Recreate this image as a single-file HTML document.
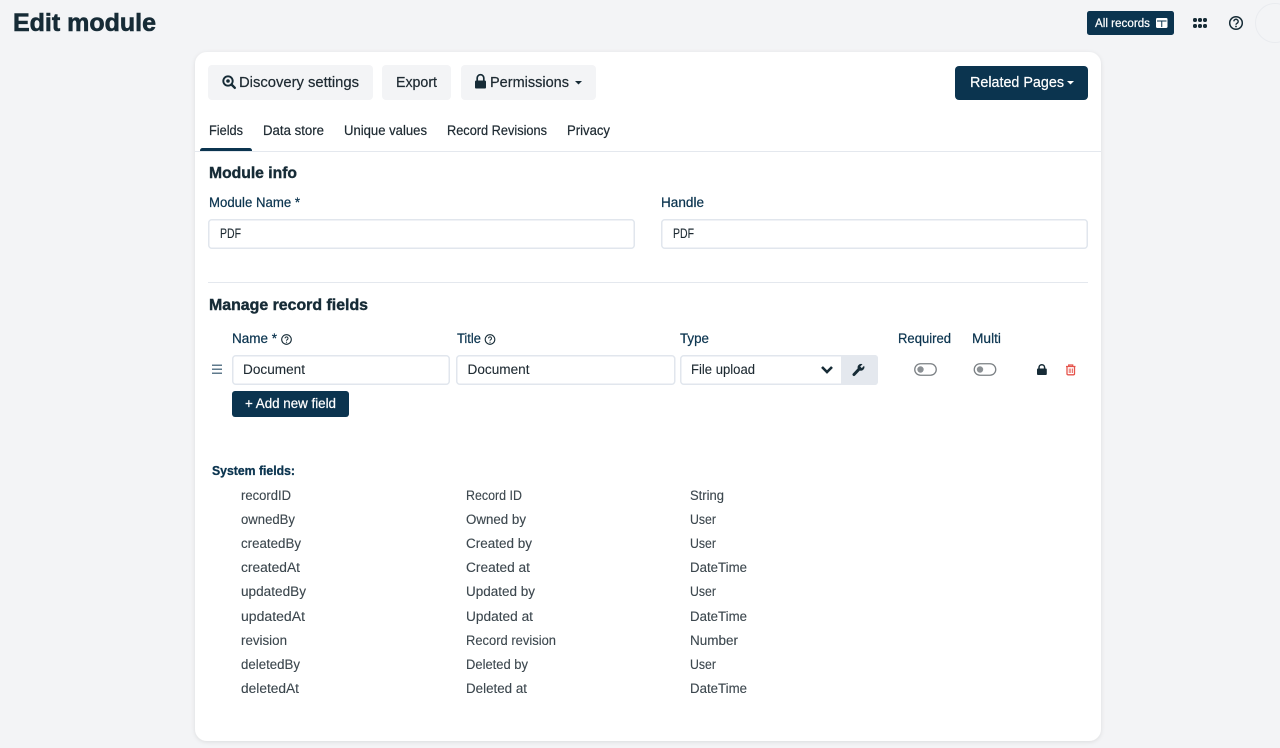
<!DOCTYPE html>
<html lang="en"><head><meta charset="utf-8"><title>Edit module</title>
<style>
html,body{margin:0;padding:0;width:1280px;height:748px;overflow:hidden;background:#f3f4f6}
svg{display:block}
text{font-family:"Liberation Sans",sans-serif;font-size:13.5px;fill:#1e2a32;stroke:#1e2a32;stroke-width:.22px;white-space:pre}
.n{fill:#0b344f;stroke:#0b344f}
.w{fill:#fff;stroke:#fff}
.b{font-weight:bold;stroke-width:.3px}
.l text{fill:#3c474e;stroke:#3c474e;stroke-width:.12px}
</style></head><body>
<svg width="1280" height="748" viewBox="0 0 1280 748" xmlns="http://www.w3.org/2000/svg">
<defs><filter id="s" x="-5%" y="-5%" width="110%" height="110%"><feDropShadow dx="0" dy="1" stdDeviation="2" flood-color="#000" flood-opacity=".1"/></filter></defs>
<rect width="1280" height="748" fill="#f3f4f6"/>

<!-- header -->
<text x="13" y="31" class="b" style="font-size:25px;fill:#162b36;stroke:#162b36;stroke-width:.6px" textLength="143" lengthAdjust="spacingAndGlyphs">Edit module</text>
<rect x="1087" y="11" width="87" height="24" rx="2.5" fill="#0b344f"/>
<text x="1095" y="27" class="w" style="font-size:11.5px" textLength="55" lengthAdjust="spacingAndGlyphs">All records</text>
<rect x="1156" y="18" width="11.500" height="10" rx="1.200" fill="#fff"/>
<path d="M1157 21h9.500M1161.750 21v6" stroke="#0b344f" stroke-width="1" fill="none"/>
<g fill="#162b36"><rect x="1193" y="18" width="4" height="4" rx="1.700"/><rect x="1198" y="18" width="4" height="4" rx="1.700"/><rect x="1203" y="18" width="4" height="4" rx="1.700"/><rect x="1193" y="24" width="4" height="4" rx="1.700"/><rect x="1198" y="24" width="4" height="4" rx="1.700"/><rect x="1203" y="24" width="4" height="4" rx="1.700"/></g>
<circle cx="1236" cy="23" r="6.300" fill="none" stroke="#162b36" stroke-width="1.500"/>
<path d="M1233.800 21.300a2.200 2.100 0 1 1 3.300 1.900c-.8.5-1.100.9-1.100 1.600" fill="none" stroke="#162b36" stroke-width="1.400"/><circle cx="1236" cy="26.500" r=".9" fill="#162b36"/>
<circle cx="1275" cy="23" r="19.500" fill="#f3f4f6" stroke="#e9ebef"/>

<!-- card -->
<rect x="195" y="52" width="906" height="689" rx="12" fill="#fff" filter="url(#s)"/>

<!-- toolbar -->
<rect x="208" y="65" width="165" height="35" rx="4" fill="#f3f4f6"/>
<rect x="382" y="65" width="69" height="35" rx="4" fill="#f3f4f6"/>
<rect x="461" y="65" width="135" height="35" rx="4" fill="#f3f4f6"/>
<rect x="955" y="66" width="133" height="34" rx="4" fill="#0b344f"/>
<circle cx="228" cy="81" r="4.700" fill="none" stroke="#162b36" stroke-width="1.900"/><circle cx="228" cy="81" r="1.800" fill="#162b36"/><path d="M231.500 84.500l3.300 3.300" stroke="#162b36" stroke-width="2.400" stroke-linecap="round"/>
<text x="239" y="87" style="font-size:14.500px" textLength="120" lengthAdjust="spacingAndGlyphs">Discovery settings</text>
<text x="396" y="87" style="font-size:14.500px" textLength="41" lengthAdjust="spacingAndGlyphs">Export</text>
<path d="M477.200 81v-3a3.300 3.300 0 0 1 6.600 0v3" fill="none" stroke="#162b36" stroke-width="1.700"/><rect x="475" y="80.500" width="11" height="8" rx="1.300" fill="#162b36"/>
<text x="490" y="87" style="font-size:14.500px" textLength="79" lengthAdjust="spacingAndGlyphs">Permissions</text>
<path d="M575 81h7l-3.500 3.500z" fill="#162b36"/>
<text x="970" y="87" class="w" style="font-size:14.500px" textLength="94" lengthAdjust="spacingAndGlyphs">Related Pages</text>
<path d="M1067 81h7l-3.500 3.500z" fill="#fff"/>

<!-- tabs -->
<rect x="195" y="151" width="906" height="1" fill="#e4e8ee"/>
<path d="M200 151v-.5a2.500 2.500 0 0 1 2.500-2.500h47a2.500 2.500 0 0 1 2.500 2.500v.5z" fill="#0b344f"/>
<text x="209" y="135" textLength="34" lengthAdjust="spacingAndGlyphs">Fields</text>
<text x="263" y="135" textLength="61" lengthAdjust="spacingAndGlyphs">Data store</text>
<text x="344" y="135" textLength="83" lengthAdjust="spacingAndGlyphs">Unique values</text>
<text x="447" y="135" textLength="100" lengthAdjust="spacingAndGlyphs">Record Revisions</text>
<text x="567" y="135" textLength="43" lengthAdjust="spacingAndGlyphs">Privacy</text>

<!-- module info -->
<text x="209" y="178" class="b" style="font-size:15.500px;fill:#162b36;stroke:#162b36;stroke-width:.4px" textLength="88" lengthAdjust="spacingAndGlyphs">Module info</text>
<text x="209" y="207" class="n" textLength="91" lengthAdjust="spacingAndGlyphs">Module Name *</text>
<text x="661" y="207" class="n" textLength="43" lengthAdjust="spacingAndGlyphs">Handle</text>
<rect x="208.750" y="219.750" width="425.500" height="28.500" rx="3" fill="#fff" stroke="#e1e6ed" stroke-width="1.500"/>
<rect x="661.750" y="219.750" width="425.500" height="28.500" rx="3" fill="#fff" stroke="#e1e6ed" stroke-width="1.500"/>
<text x="220" y="238" style="font-size:13.500px;stroke-width:.1px" textLength="21" lengthAdjust="spacingAndGlyphs">PDF</text>
<text x="673" y="238" style="font-size:13.500px;stroke-width:.1px" textLength="21" lengthAdjust="spacingAndGlyphs">PDF</text>
<rect x="208" y="282" width="880" height="1" fill="#e4e8ee"/>

<!-- manage record fields -->
<text x="209" y="310" class="b" style="font-size:15.500px;fill:#162b36;stroke:#162b36;stroke-width:.4px" textLength="159" lengthAdjust="spacingAndGlyphs">Manage record fields</text>
<text x="232" y="343" class="n" textLength="45" lengthAdjust="spacingAndGlyphs">Name *</text>
<circle cx="286.500" cy="339.500" r="4.800" fill="none" stroke="#162b36" stroke-width="1.100"/><path d="M285 338.300a1.500 1.500 0 1 1 2.200 1.400c-.5.300-.7.600-.7 1.100" fill="none" stroke="#162b36"/><circle cx="286.500" cy="342.200" r=".6" fill="#162b36"/>
<text x="457" y="343" class="n" textLength="24" lengthAdjust="spacingAndGlyphs">Title</text>
<circle cx="490" cy="339.500" r="4.800" fill="none" stroke="#162b36" stroke-width="1.100"/><path d="M488.500 338.300a1.500 1.500 0 1 1 2.200 1.400c-.5.300-.7.600-.7 1.100" fill="none" stroke="#162b36"/><circle cx="490" cy="342.200" r=".6" fill="#162b36"/>
<text x="680" y="343" class="n" textLength="29" lengthAdjust="spacingAndGlyphs">Type</text>
<text x="898" y="343" class="n" textLength="53" lengthAdjust="spacingAndGlyphs">Required</text>
<text x="972" y="343" class="n" textLength="29" lengthAdjust="spacingAndGlyphs">Multi</text>

<g fill="#5f7a8c"><rect x="212" y="364.500" width="10" height="1.500"/><rect x="212" y="368.500" width="10" height="1.500"/><rect x="212" y="372.500" width="10" height="1.500"/></g>
<rect x="232.750" y="355.750" width="216.500" height="28.500" rx="3" fill="#fff" stroke="#e1e6ed" stroke-width="1.500"/>
<rect x="456.750" y="355.750" width="218" height="28.500" rx="3" fill="#fff" stroke="#e1e6ed" stroke-width="1.500"/>
<text x="243" y="374" style="stroke-width:.1px" textLength="62" lengthAdjust="spacingAndGlyphs">Document</text>
<text x="467.500" y="374" style="stroke-width:.1px" textLength="62" lengthAdjust="spacingAndGlyphs">Document</text>
<rect x="680.750" y="355.750" width="196.500" height="28.500" rx="3" fill="#fff" stroke="#e1e6ed" stroke-width="1.500"/>
<path d="M841 355h34a3 3 0 0 1 3 3v24a3 3 0 0 1-3 3h-34z" fill="#e4e8ee"/>
<text x="691" y="374" style="stroke-width:.1px" textLength="64" lengthAdjust="spacingAndGlyphs">File upload</text>
<path d="M822 367l5 5 5-5" fill="none" stroke="#162b36" stroke-width="2.600"/>
<path d="M854 374.500l5.500-5.800" stroke="#162b36" stroke-width="3" stroke-linecap="round"/><path d="M858 369a3.500 3.500 0 0 1 4.500-4.800l-2.300 2.300 1.600 1.600 2.300-2.300a3.500 3.500 0 0 1-4.800 4.500z" fill="#162b36"/>
<rect x="914.750" y="363.750" width="21.500" height="11.500" rx="5.750" fill="#fff" stroke="#7b8084" stroke-width="1.300"/><circle cx="920.500" cy="369.500" r="3.200" fill="#8b9094"/>
<rect x="974.250" y="363.750" width="21.500" height="11.500" rx="5.750" fill="#fff" stroke="#7b8084" stroke-width="1.300"/><circle cx="980" cy="369.500" r="3.200" fill="#8b9094"/>
<path d="M1039 369v-1.500a2.800 2.800 0 0 1 5.600 0V369" fill="none" stroke="#162b36" stroke-width="1.500"/><rect x="1037" y="368.500" width="9.800" height="6.500" rx="1" fill="#162b36"/>
<g fill="none" stroke="#e5534b" stroke-width="1.300"><path d="M1066 366.500h9.500M1068.700 366.500v-1.500h4v1.500"/><path d="M1067 366.500v7.300a1 1 0 0 0 1 1h5.500a1 1 0 0 0 1-1v-7.300"/><path d="M1069.200 368.500v4.500M1070.800 368.500v4.500M1072.400 368.500v4.500" stroke-width=".8"/></g>

<rect x="232" y="391" width="117" height="26" rx="3" fill="#0b344f"/>
<text x="245" y="408" class="w" textLength="91" lengthAdjust="spacingAndGlyphs">+ Add new field</text>

<!-- system fields -->
<text x="212" y="475" class="n b" style="font-size:13px" textLength="83" lengthAdjust="spacingAndGlyphs">System fields:</text>
<g class="l">
<text x="241" y="500" textLength="50" lengthAdjust="spacingAndGlyphs">recordID</text>
<text x="466" y="500" textLength="56" lengthAdjust="spacingAndGlyphs">Record ID</text>
<text x="690" y="500" textLength="34" lengthAdjust="spacingAndGlyphs">String</text>
<text x="241" y="524" textLength="54" lengthAdjust="spacingAndGlyphs">ownedBy</text>
<text x="466" y="524" textLength="60" lengthAdjust="spacingAndGlyphs">Owned by</text>
<text x="690" y="524" textLength="26" lengthAdjust="spacingAndGlyphs">User</text>
<text x="241" y="548" textLength="60" lengthAdjust="spacingAndGlyphs">createdBy</text>
<text x="466" y="548" textLength="66" lengthAdjust="spacingAndGlyphs">Created by</text>
<text x="690" y="548" textLength="26" lengthAdjust="spacingAndGlyphs">User</text>
<text x="241" y="572" textLength="59" lengthAdjust="spacingAndGlyphs">createdAt</text>
<text x="466" y="572" textLength="64" lengthAdjust="spacingAndGlyphs">Created at</text>
<text x="690" y="572" textLength="57" lengthAdjust="spacingAndGlyphs">DateTime</text>
<text x="241" y="596" textLength="65" lengthAdjust="spacingAndGlyphs">updatedBy</text>
<text x="466" y="596" textLength="69" lengthAdjust="spacingAndGlyphs">Updated by</text>
<text x="690" y="596" textLength="26" lengthAdjust="spacingAndGlyphs">User</text>
<text x="241" y="621" textLength="64" lengthAdjust="spacingAndGlyphs">updatedAt</text>
<text x="466" y="621" textLength="67" lengthAdjust="spacingAndGlyphs">Updated at</text>
<text x="690" y="621" textLength="57" lengthAdjust="spacingAndGlyphs">DateTime</text>
<text x="241" y="645" textLength="46" lengthAdjust="spacingAndGlyphs">revision</text>
<text x="466" y="645" textLength="90" lengthAdjust="spacingAndGlyphs">Record revision</text>
<text x="690" y="645" textLength="48" lengthAdjust="spacingAndGlyphs">Number</text>
<text x="241" y="669" textLength="59" lengthAdjust="spacingAndGlyphs">deletedBy</text>
<text x="466" y="669" textLength="62" lengthAdjust="spacingAndGlyphs">Deleted by</text>
<text x="690" y="669" textLength="26" lengthAdjust="spacingAndGlyphs">User</text>
<text x="241" y="693" textLength="58" lengthAdjust="spacingAndGlyphs">deletedAt</text>
<text x="466" y="693" textLength="61" lengthAdjust="spacingAndGlyphs">Deleted at</text>
<text x="690" y="693" textLength="57" lengthAdjust="spacingAndGlyphs">DateTime</text>
</g>
</svg>
</body></html>
